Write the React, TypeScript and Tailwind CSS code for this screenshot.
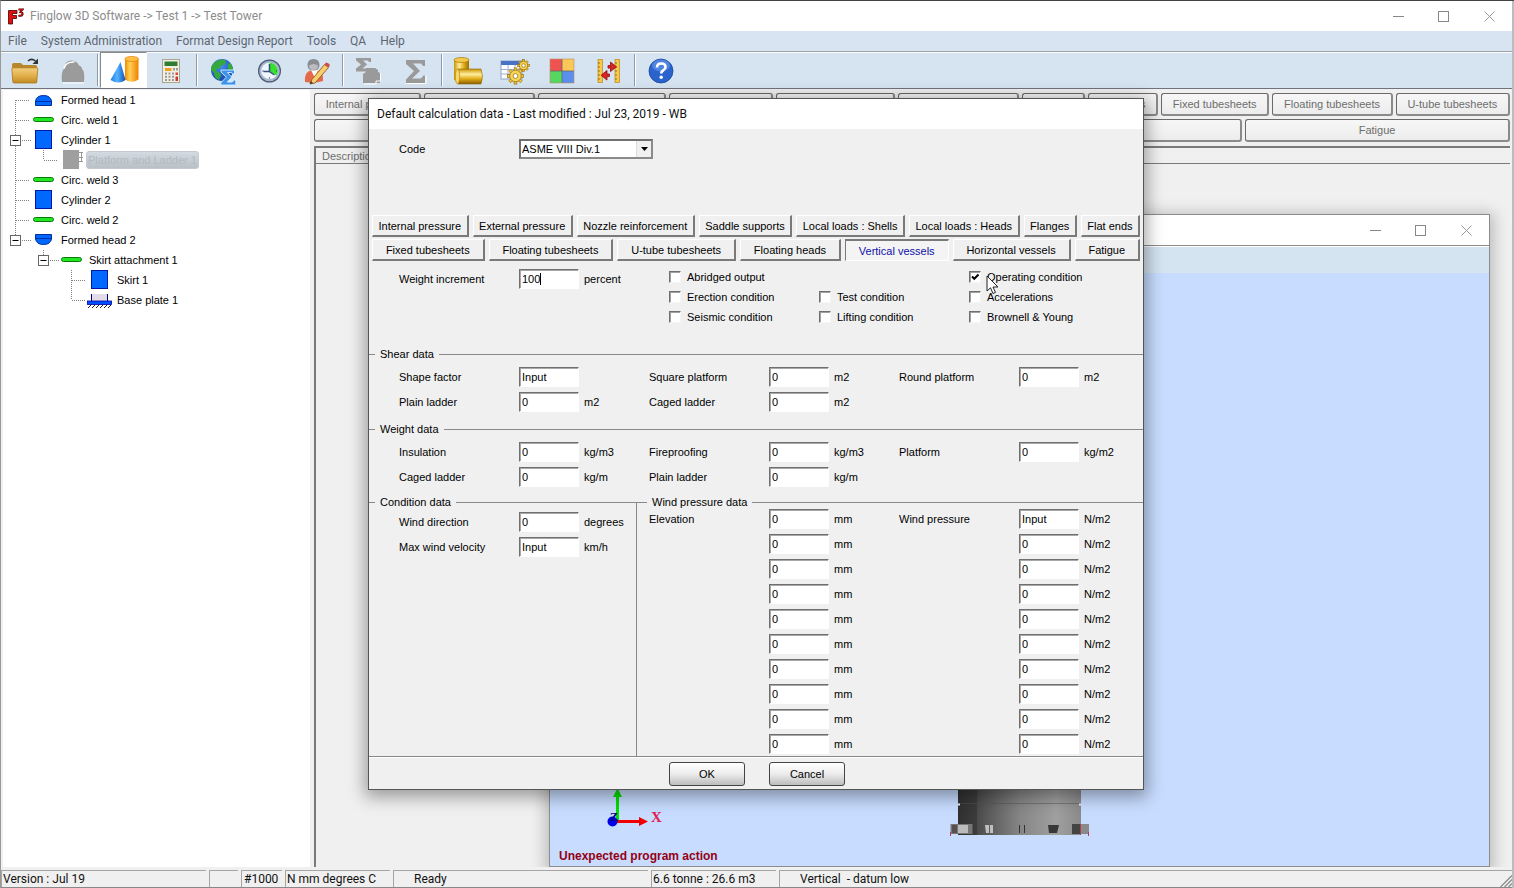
import React, { useId } from "react";

const SYS = "font-['Roboto','Open_Sans',sans-serif]";
const UI = "font-['Liberation_Sans',Arial,sans-serif]";

/* ---------- toolbar icons ---------- */

function Defs() {
  return (
    <svg width="0" height="0" className="absolute" aria-hidden="true">
      <defs>
        <linearGradient id="gold" x1="0" y1="0" x2="0" y2="1">
          <stop offset="0" stopColor="#f3cf80" />
          <stop offset="0.5" stopColor="#e3b04c" />
          <stop offset="1" stopColor="#c18a24" />
        </linearGradient>
        <linearGradient id="pipe" x1="0" y1="0" x2="0" y2="1">
          <stop offset="0" stopColor="#c99400" />
          <stop offset="0.35" stopColor="#ffefa0" />
          <stop offset="0.65" stopColor="#e3ad1a" />
          <stop offset="1" stopColor="#8d5f00" />
        </linearGradient>
        <linearGradient id="pipeV" x1="0" y1="0" x2="1" y2="0">
          <stop offset="0" stopColor="#c99400" />
          <stop offset="0.35" stopColor="#ffefa0" />
          <stop offset="0.65" stopColor="#e3ad1a" />
          <stop offset="1" stopColor="#9d6f00" />
        </linearGradient>
        <linearGradient id="orange" x1="0" y1="0" x2="1" y2="0">
          <stop offset="0" stopColor="#f08a00" />
          <stop offset="0.35" stopColor="#ffd257" />
          <stop offset="1" stopColor="#f08000" />
        </linearGradient>
        <linearGradient id="cone" x1="0" y1="0" x2="1" y2="0">
          <stop offset="0" stopColor="#1d7ee0" />
          <stop offset="0.45" stopColor="#58b4ff" />
          <stop offset="1" stopColor="#0b50b8" />
        </linearGradient>
        <radialGradient id="globe" cx="0.4" cy="0.3" r="0.8">
          <stop offset="0" stopColor="#4a94f4" />
          <stop offset="1" stopColor="#0b3aa5" />
        </radialGradient>
        <linearGradient id="vessel" x1="0" y1="0" x2="1" y2="0">
          <stop offset="0" stopColor="#303030" />
          <stop offset="0.15" stopColor="#3c3c3c" />
          <stop offset="0.16" stopColor="#4c4c4c" />
          <stop offset="0.5" stopColor="#858585" />
          <stop offset="0.8" stopColor="#a0a0a0" />
          <stop offset="1" stopColor="#8a8a8a" />
        </linearGradient>
      </defs>
    </svg>
  );
}

function Svg({ children }: { children: React.ReactNode }) {
  return (
    <svg width="30" height="30" viewBox="0 0 30 30" className="shrink-0" aria-hidden="true">
      {children}
    </svg>
  );
}

const FolderIcon = () => (
  <Svg>
    <path d="M2 8.500 q0-1.500 1.500-1.500 h7.500 l2 2 h12.500 q1.500 0 1.500 1.500 v15 q0 1.500-1.500 1.500 h-21 q-1.500 0-1.500-1.500z" fill="#b8862b" />
    <path d="M1.800 12.800 q0-1 1-1 h24 q1.200 0 1 1.200 l-1 12.800 q0 1.200-1.500 1.200 h-21 q-1.500 0-1.500-1.200z" fill="url(#gold)" stroke="#a87a20" strokeWidth="0.800" />
    <path d="M18 5 q3.500-3.200 7.500 0" fill="none" stroke="#333" strokeWidth="1.600" />
    <path d="M28 2.500 v5.500 h-5.500z" fill="#333" />
  </Svg>
);
const BagIcon = () => (
  <Svg>
    <path d="M5 26 q-1-8 1-12 q1-1.500 2-2 q-1-7 6-7.500 q6 0 8 5 q3 1 3 3.500 q1.500 1 2 4 q0.500 5 0 9z" fill="#9b9b9b" />
    <path d="M7 12.500 l2-4 q3-3 8.500-2.500" fill="none" stroke="#fff" strokeWidth="1.400" />
    <path d="M6 27 h21" stroke="#fff" strokeWidth="1" />
  </Svg>
);
const ShapesIcon = () => (
  <Svg>
    <path d="M16 4.500 v20 q6.500 4.500 13.500 0 v-20z" fill="url(#orange)" />
    <ellipse cx="22.700" cy="4" rx="6.800" ry="2.500" fill="#ffc04a" stroke="#e88600" strokeWidth="0.800" />
    <path d="M11.500 7 L1.500 25 q8 5 15 0z" fill="url(#cone)" />
  </Svg>
);
const CalculatorIcon = () => (
  <Svg>
    <rect x="6.500" y="3.500" width="17" height="23" fill="#f1efe2" stroke="#a8a68f" />
    <rect x="8.500" y="5.500" width="13" height="4.500" fill="#2f7d32" />
    <rect x="9" y="12" width="6.500" height="3" fill="#f0a020" />
    <g fill="#9b9b9b">
      <rect x="17" y="12" width="2" height="2.500" /><rect x="20" y="12" width="2" height="2.500" />
      <rect x="9" y="16.500" width="2" height="2" /><rect x="12.500" y="16.500" width="2" height="2" /><rect x="16" y="16.500" width="2" height="2" />
      <rect x="9" y="19.800" width="2" height="2" /><rect x="12.500" y="19.800" width="2" height="2" /><rect x="16" y="19.800" width="2" height="2" />
      <rect x="9" y="23" width="2" height="2" /><rect x="12.500" y="23" width="2" height="2" /><rect x="16" y="23" width="2" height="2" />
    </g>
    <rect x="19.500" y="16.500" width="2.500" height="2.500" fill="#d44" />
    <rect x="19.500" y="20.500" width="2.500" height="4.500" fill="#c33" />
  </Svg>
);
const GlobeIcon = () => (
  <Svg>
    <circle cx="14" cy="14" r="11" fill="url(#globe)" />
    <path d="M5 8 q4-5 11-4.500 l2 2 -1 3 -4 1 -1 3 -4 0.500 1 2.500 q4 1 4 4 l-2 4.500 q-5-2-5-7 l-3-3 q0-4 2-6z M20 7 l3 1 q2.500 4 2 8 l-5-2z" fill="#35a83e" />
    <path d="M13 14 h13.500 v4 h-2 l-1-1.500 h-4 l4.300 4.700 -4.500 4.800 h5 l1.500-2 h2 v5 h-15 v-2.200 l5.500-5.600 -5.300-5.300z" fill="#3d93ea" stroke="#dbeeff" strokeWidth="0.900" />
  </Svg>
);
const ClockIcon = () => (
  <Svg>
    <circle cx="14.500" cy="15" r="11.500" fill="#4b5a75" />
    <circle cx="14.500" cy="15" r="10.300" fill="#a9b5cb" />
    <circle cx="14.500" cy="15" r="8.300" fill="#eef6ff" />
    <path d="M14.500 15 V6.700 A8.300 8.300 0 0 1 21.500 19.400z" fill="#36e02e" />
    <path d="M14.500 8 v7.500 l5 3.500 M14.500 15.500 h-6" fill="none" stroke="#33507e" strokeWidth="1.500" />
    <g fill="#456"><circle cx="8" cy="15" r="0.700" /><circle cx="14.500" cy="22" r="0.700" /><circle cx="21.500" cy="15" r="0.700" /></g>
  </Svg>
);
const UserPencilIcon = () => (
  <Svg>
    <path d="M3 26 q-1-12 9-12 q10 0 9 11 q-8 3-18 1z" fill="#e46a4b" />
    <path d="M9 14 l4 8 3-8z" fill="#fff" />
    <path d="M5.500 9 q0-6 6-6 q6 0 6 6 q0 5.500-6 5.500 q-6 0-6-5.500z" fill="#8a8d92" />
    <path d="M7 9.500 q4.500-3 9 0 q0 4.500-4.500 4.500 q-4.500 0-4.500-4.500z" fill="#b9bcc0" />
    <path d="M9.500 24 L22.500 8.500 l4 3 L13 27 l-5 1z" fill="#f6cf72" stroke="#a4621f" strokeWidth="1" />
    <path d="M22.500 8.500 l1.500-2 q2.500 0 4 2.500 l-1.500 2.500z" fill="#c8504c" />
    <path d="M8 28 l1-3 2 2z" fill="#333" />
  </Svg>
);
const SigmaBagIcon = () => (
  <Svg>
    <path d="M2 2 h15 v4 h-2 l-1-1.500 h-5 l4 4 -4.500 4 h5 v3 h-11.500 v-3 l5-4 -5-4z" fill="#9a9a9a" />
    <path d="M9 27 v-9 l3-2 v-4 h9 l3 2 v2 l2 1 v10z" fill="#9a9a9a" />
    <path d="M10 28 h12 v-3 h4.500 v-8" fill="none" stroke="#fff" strokeWidth="1" />
  </Svg>
);
const SigmaIcon = () => (
  <Svg>
    <path d="M5 4 h19 v6 h-2 l-2-2.500 h-8 l7 7.500 -8 7.500 h9 l2.500-3 h1.500 v7.500 h-19 v-3.500 l8-8.500 -8-7z" fill="#9a9a9a" />
    <path d="M5 27.500 h20 v-8" fill="none" stroke="#fff" strokeWidth="1" />
  </Svg>
);
const PipesIcon = () => (
  <Svg>
    <path d="M1 4 v20 q7 4 15 0 v-20z" fill="url(#pipeV)" />
    <ellipse cx="8.500" cy="4" rx="7.500" ry="2.500" fill="#f2c94b" stroke="#a97900" strokeWidth="0.700" />
    <path d="M5 13 h23 q3 7 0 15 h-23 q-3-7 0-15z" fill="url(#pipe)" stroke="#8d6400" strokeWidth="0.600" />
    <ellipse cx="4.500" cy="20.500" rx="2.200" ry="7.500" fill="#f6d768" stroke="#a97900" strokeWidth="0.600" />
  </Svg>
);

function Gear({ cx, cy, r }: { cx: number; cy: number; r: number }) {
  return (
    <g transform={`translate(${cx} ${cy})`}>
      {[0, 45, 90, 135, 180, 225, 270, 315].map((a) => (
        <rect key={a} x={-r * 0.24} y={-r * 1.4} width={r * 0.48} height={r * 0.6} fill="#f3c93c" stroke="#9a7412" strokeWidth="0.700" transform={`rotate(${a})`} />
      ))}
      <circle r={r} fill="#f7d65a" stroke="#9a7412" strokeWidth="0.800" />
      <circle r={r * 0.42} fill="#fff" stroke="#9a7412" strokeWidth="0.800" />
    </g>
  );
}
const TableGearIcon = () => (
  <Svg>
    <rect x="1" y="5" width="21" height="18" fill="#fff" stroke="#8fa3c8" />
    <rect x="1" y="5" width="21" height="4" fill="#4a72c4" />
    <path d="M1 13.500 h21 M1 18 h21 M8 9 v14 M15 9 v14" stroke="#9db0d0" strokeWidth="1" />
    <Gear cx={23.500} cy={9.500} r={4.200} />
    <Gear cx={15.500} cy={20} r={5.800} />
  </Svg>
);
const SquaresIcon = () => (
  <Svg>
    <rect x="3" y="3" width="12" height="12" fill="#ef5350" />
    <rect x="15" y="3" width="12" height="12" fill="#fbc757" />
    <rect x="3" y="15" width="12" height="12" fill="#56d860" />
    <rect x="15" y="15" width="12" height="12" fill="#5b8fee" />
    <path d="M15 3 v24 M3 15 h24" stroke="#5b6b6b" strokeWidth="0.800" />
    <rect x="3" y="3" width="24" height="24" fill="none" stroke="#b98f6a" strokeWidth="0.600" />
  </Svg>
);
const RulersIcon = () => (
  <Svg>
    <rect x="4" y="3.500" width="4.500" height="23" fill="#f7c948" stroke="#c1922a" strokeWidth="0.800" />
    <rect x="21" y="3.500" width="4.500" height="23" fill="#f7c948" stroke="#c1922a" strokeWidth="0.800" />
    <path d="M4 7h2M4 11h2M4 15h2M4 19h2M4 23h2M21 7h2M21 11h2M21 15h2M21 19h2M21 23h2" stroke="#7a5a10" strokeWidth="0.800" />
    <path d="M14 9.500 h2.500 v-3.500 l6 4.800 -6 4.800 v-3.500 h-2.500z" fill="#d92424" stroke="#8e0f0f" strokeWidth="0.800" />
    <path d="M15.500 18 h-2.500 v-3.500 l-6 4.800 6 4.800 v-3.500 h2.500z" fill="#d92424" stroke="#8e0f0f" strokeWidth="0.800" />
  </Svg>
);
const HelpIcon = () => (
  <Svg>
    <circle cx="15" cy="15" r="12" fill="#2a63cc" stroke="#1a459c" strokeWidth="0.800" />
    <ellipse cx="15" cy="9.500" rx="9" ry="6" fill="#6c9bea" opacity="0.600" />
    <path d="M11 11.500 q0-4 4.200-4 q4.300 0 4.300 3.600 q0 2-2.300 3.300 q-2 1.200-2 3.100" fill="none" stroke="#fff" strokeWidth="2.600" />
    <circle cx="15.200" cy="21.300" r="1.700" fill="#fff" />
  </Svg>
);

const TOOLBAR: ({ label: string; icon: React.ReactNode; on?: boolean } | null)[] = [
  { label: "Open", icon: <FolderIcon /> },
  { label: "Load weight", icon: <BagIcon /> },
  null,
  { label: "3D model", icon: <ShapesIcon />, on: true },
  { label: "Calculator", icon: <CalculatorIcon /> },
  null,
  { label: "Global sum", icon: <GlobeIcon /> },
  { label: "Time", icon: <ClockIcon /> },
  { label: "Edit user", icon: <UserPencilIcon /> },
  null,
  { label: "Sum weights", icon: <SigmaBagIcon /> },
  { label: "Sum", icon: <SigmaIcon /> },
  null,
  { label: "Materials", icon: <PipesIcon /> },
  { label: "Table settings", icon: <TableGearIcon /> },
  { label: "Colours", icon: <SquaresIcon /> },
  { label: "Dimensions", icon: <RulersIcon /> },
  null,
  { label: "Help", icon: <HelpIcon /> },
];

/* ---------- tree ---------- */

type Cell = "tee" | "top" | "end" | "line" | "blank" | "minus" | "minusEnd";
type Glyph = "headUp" | "headDown" | "weld" | "cyl" | "gray" | "base";

const TREE: { cells: Cell[]; icon: Glyph; label: string; selected?: boolean }[] = [
  { cells: ["top"], icon: "headUp", label: "Formed head 1" },
  { cells: ["tee"], icon: "weld", label: "Circ. weld 1" },
  { cells: ["minus"], icon: "cyl", label: "Cylinder 1" },
  { cells: ["line", "end"], icon: "gray", label: "Platform and Ladder 1", selected: true },
  { cells: ["tee"], icon: "weld", label: "Circ. weld 3" },
  { cells: ["tee"], icon: "cyl", label: "Cylinder 2" },
  { cells: ["tee"], icon: "weld", label: "Circ. weld 2" },
  { cells: ["minusEnd"], icon: "headDown", label: "Formed head 2" },
  { cells: ["blank", "minusEnd"], icon: "weld", label: "Skirt attachment 1" },
  { cells: ["blank", "blank", "tee"], icon: "cyl", label: "Skirt 1" },
  { cells: ["blank", "blank", "end"], icon: "base", label: "Base plate 1" },
];

function TreeCell({ kind }: { kind: Cell }) {
  const v: Record<Cell, string> = {
    top: "M12.500 10 V20 M13 10.500 H27",
    tee: "M12.500 0 V20 M13 10.500 H27",
    end: "M12.500 0 V10 M13 10.500 H27",
    line: "M12.500 0 V20",
    blank: "",
    minus: "M12.500 0 V20 M19 10.500 H28",
    minusEnd: "M12.500 0 V5 M19 10.500 H28",
  };
  return (
    <svg width="28" height="20" viewBox="0 0 28 20" className="shrink-0" aria-hidden="true">
      {v[kind] && <path d={v[kind]} stroke="#808080" strokeDasharray="1 1" fill="none" />}
      {(kind === "minus" || kind === "minusEnd") && (
        <>
          <rect x="7.500" y="5.500" width="10" height="10" fill="#fff" stroke="#666" />
          <path d="M9.500 10.500 h6" stroke="#000" />
        </>
      )}
    </svg>
  );
}

function TreeGlyph({ kind }: { kind: Glyph }) {
  return (
    <svg width="26" height="20" viewBox="0 0 26 20" className="-mx-px shrink-0" aria-hidden="true">
      {kind === "headUp" && (
        <>
          <path d="M5.500 15.500 V11 q1-5.500 8-5.500 q7 0 8 5.500 v4.500z" fill="#0068ff" stroke="#0030a0" />
          <path d="M5 11.500 h17" stroke="#0030a0" />
        </>
      )}
      {kind === "headDown" && (
        <>
          <path d="M5.500 4.500 V9 q1 5.500 8 5.500 q7 0 8-5.500 v-4.500z" fill="#0068ff" stroke="#0030a0" />
          <path d="M5 8.500 h17" stroke="#0030a0" />
        </>
      )}
      {kind === "weld" && <rect x="3.500" y="7.500" width="20" height="4" rx="2" fill="#22e622" stroke="#087a08" />}
      {kind === "cyl" && <rect x="5.500" y="0.500" width="16" height="18" fill="#0068ff" stroke="#0018a8" />}
      {kind === "gray" && (
        <>
          <rect x="5" y="0" width="16" height="19" fill="#9f9f9f" />
          <path d="M21 2.500 h4 M21 7.500 h4 M21 11.500 h4 M23.500 2 v10" stroke="#999" fill="none" />
        </>
      )}
      {kind === "base" && (
        <>
          <rect x="5" y="4" width="16" height="7" fill="#e2dce8" />
          <path d="M5.500 4 v7 M21.500 4 v7" stroke="#000080" />
          <rect x="1.500" y="11" width="24" height="3.500" fill="#0050ff" stroke="#0000a0" strokeWidth="0.800" />
          <path d="M2 18 l3-3 M6 18 l3-3 M10 18 l3-3 M14 18 l3-3 M18 18 l3-3 M22 18 l3-3" stroke="#222" />
        </>
      )}
    </svg>
  );
}

function Tree() {
  return (
    <ul className="w-[307px] shrink-0 overflow-hidden bg-white">
      {TREE.map((n) => (
        <li key={n.label} className="flex h-5 items-center whitespace-nowrap">
          {n.cells.map((c, i) => (
            <TreeCell key={i} kind={c} />
          ))}
          <TreeGlyph kind={n.icon} />
          {n.selected ? (
            <span className="ml-[3px] h-[18px] rounded-[3px] border border-[#c3c9cf] bg-linear-to-b from-[#d3dbe2] to-[#b9c0c6] px-px leading-4 text-[#b2bac1]">
              {n.label}
            </span>
          ) : (
            <span className="ml-1.5">{n.label}</span>
          )}
        </li>
      ))}
    </ul>
  );
}

/* ---------- main window pieces ---------- */

function WindowButtons() {
  return (
    <div className="flex h-full">
      <button aria-label="Minimize" className="flex w-[45px] items-center justify-center">
        <svg width="11" height="11" viewBox="0 0 11 11"><path d="M0 5.500 h11" stroke="#888" /></svg>
      </button>
      <button aria-label="Maximize" className="flex w-[45px] items-center justify-center">
        <svg width="11" height="11" viewBox="0 0 11 11"><rect x="0.500" y="0.500" width="10" height="10" fill="none" stroke="#888" /></svg>
      </button>
      <button aria-label="Close" className="flex w-[46px] items-center justify-center">
        <svg width="11" height="11" viewBox="0 0 11 11"><path d="M0.500 0.500 l10 10 M10.500 0.500 l-10 10" stroke="#999" fill="none" /></svg>
      </button>
    </div>
  );
}

const ROW1 = ["Internal pressure", "External pressure", "Nozzle reinforcement", "Saddle supports", "Local loads : Shells", "Local loads : Heads", "Flanges", "Flat ends"];
const ROW2 = ["Fixed tubesheets", "Floating tubesheets", "U-tube tubesheets", "Floating heads", "Vertical vessels", "Horizontal vessels", "Fatigue"];

function CategoryButton({ label }: { label: string }) {
  return (
    <button className="h-[23px] flex-auto whitespace-nowrap rounded-[3px] border border-[#6a6a6a] border-r-2 border-b-2 border-r-[#8a8a8a] border-b-[#8a8a8a] bg-linear-to-b from-[#f7f7f7] to-[#ececec] text-[#6d6d6d]">
      {label}
    </button>
  );
}

function ModelWindow() {
  return (
    <section className="absolute top-[124px] right-[22px] bottom-0 left-[235px] flex flex-col border border-[#8c8c8c] bg-white shadow-[0_3px_14px_4px_rgba(0,0,0,0.22)]">
      <div className="flex h-[31px] shrink-0 justify-end border-b border-[#8d8d8d]">
        <WindowButtons />
      </div>
      <div className="mt-px h-[26px] shrink-0 bg-[#d5e4f1]" />
      <div className="relative flex-1 bg-[#c7dcff]">
        <svg width="60" height="60" viewBox="0 0 60 60" className="absolute bottom-[30px] left-[55px]" aria-label="Axes">
          <path d="M12.500 46 V15" stroke="#00e000" strokeWidth="3" />
          <path d="M12.500 12 l4.500 9 h-9z" fill="#00e000" />
          <path d="M10 45.500 H34" stroke="#f00000" strokeWidth="3" />
          <path d="M43 45.500 l-9-4.500 v9z" fill="#f00000" />
          <circle cx="7.500" cy="45.500" r="5" fill="#0000e8" />
          <text x="5" y="45" fontFamily="Liberation Serif" fontWeight="700" fontSize="12" fill="#000090">Z</text>
          <text x="46" y="46" fontFamily="Liberation Serif" fontWeight="700" fontSize="15" fill="#e02050">X</text>
        </svg>
        <svg width="140" height="100" viewBox="0 0 140 100" className="absolute bottom-[30px] left-[400px]" aria-label="Vessel">
          <rect x="8" y="0" width="123" height="99" fill="url(#vessel)" />
          <path d="M8 67.500 h123" stroke="#555" opacity="0.500" />
          <path d="M8 68.500 h2 M129 68.500 h2" stroke="#e8eefa" strokeWidth="2" />
          <path d="M0.500 88 h22 v10 h-22z" fill="#777" />
          <path d="M8 89 h10 v8 h-10z" fill="#bbb" />
          <path d="M2 89 h5 v8 h-5z" fill="#5a5050" />
          <path d="M35 89 h4 v8 h-3z M40 89 h3 v8 h-3z" fill="#c0c0c0" />
          <path d="M69.500 89 v8 M74.500 89 v8" stroke="#333" />
          <path d="M98 89 h11 l-2 8 h-8z" fill="#383838" />
          <path d="M122 88 h9 v10 h-9z" fill="#444" />
          <path d="M131 88 h8 v10 h-8z" fill="#8a8a8a" />
          <path d="M130.500 88 v11 M138.500 96 v4 M0.500 96 v4" stroke="#b04050" />
        </svg>
        <p className="absolute bottom-0.5 left-[9px] text-[12px] leading-4 font-bold text-[#960014]">Unexpected program action</p>
      </div>
    </section>
  );
}

/* ---------- dialog ---------- */

const INPUT =
  "h-5 w-[60px] rounded-none border border-t-[#6f6f6f] border-l-[#6f6f6f] border-r-white border-b-white bg-white pl-0.5 text-[11px] shadow-[inset_1px_1px_0_#a8a8a8] outline-none";

function Field({ label, name, value, unit, caret }: { label?: string; name?: string; value: string; unit?: string; caret?: boolean }) {
  const id = useId();
  return (
    <div className="flex h-5 w-[250px] shrink-0 items-center whitespace-nowrap">
      <label htmlFor={id} className="w-[120px]">
        {label}
      </label>
      <span className="relative flex">
        <input id={id} aria-label={name ?? label} defaultValue={value} className={INPUT} />
        {caret && <span className="absolute top-1 left-[21px] h-3 w-px bg-black" />}
      </span>
      <span className="ml-[5px]">{unit}</span>
    </div>
  );
}

function Check({ label, checked }: { label: string; checked?: boolean }) {
  return (
    <label className="flex h-5 w-[150px] items-center gap-1.5 whitespace-nowrap">
      <span className="relative flex">
        <input
          type="checkbox"
          defaultChecked={checked}
          className="peer size-3 appearance-none border border-t-[#6f6f6f] border-l-[#6f6f6f] border-r-[#f5f5f5] border-b-[#f5f5f5] bg-white shadow-[inset_1px_1px_0_#a0a0a0]"
        />
        <svg width="12" height="12" viewBox="0 0 12 12" className="pointer-events-none absolute inset-0 hidden peer-checked:block">
          <path d="M3 5.500 l2.300 2.300 L9.500 3.500" fill="none" stroke="#000" strokeWidth="2" />
        </svg>
      </span>
      {label}
    </label>
  );
}

function GroupTitle({ children, lead = "w-1.5" }: { children: string; lead?: string }) {
  return (
    <h3 className="flex h-4 items-center gap-[5px] whitespace-nowrap">
      <span className={`h-px shrink-0 bg-[#888] ${lead}`} />
      {children}
      <span className="h-px flex-1 bg-[#888]" />
    </h3>
  );
}

function Tab({ label, active }: { label: string; active?: boolean }) {
  return (
    <button
      role="tab"
      aria-selected={!!active}
      className={
        "h-[22px] flex-auto whitespace-nowrap border pt-px " +
        (active
          ? "border-t-2 border-t-[#7a7a7a] border-l-[#7a7a7a] border-r-white border-b-white bg-[#f4f4f4] text-[#1010a8]"
          : "border-r-2 border-b-2 border-t-white border-l-white border-r-[#7a7a7a] border-b-[#7a7a7a] bg-[#f0f0f0]")
      }
    >
      {label}
    </button>
  );
}

const PUSH =
  "h-6 w-[76px] rounded-[3px] border border-[#444] bg-linear-to-b from-white via-[#ececec] to-[#bdbdbd]";

function Dialog() {
  return (
    <div
      role="dialog"
      aria-label="Default calculation data"
      className="absolute top-[97px] left-[367px] flex w-[776px] flex-col border border-[#555] bg-[#f0f0f0] shadow-[0_4px_16px_3px_rgba(0,0,0,0.36)]"
    >
      <h2 className={`h-[30px] bg-white pl-2 text-[12px] leading-[30px] text-[#111] ${SYS}`}>
        Default calculation data - Last modified : Jul 23, 2019 - WB
      </h2>

      <div className="mt-2.5 flex h-5 items-center pl-[30px]">
        <label htmlFor="code" className="w-[120px]">Code</label>
        <span className="relative flex">
          <select
            id="code"
            className="h-5 w-[134px] appearance-none rounded-none border-2 border-t-[#6f6f6f] border-l-[#6f6f6f] border-r-[#8a8a8a] border-b-[#8a8a8a] bg-white pl-px text-[11px]"
          >
            <option>ASME VIII Div.1</option>
          </select>
          <span className="pointer-events-none absolute top-0.5 right-0.5 flex h-4 w-[15px] items-center justify-center border-l border-l-[#ddd] bg-[#f0f0f0]">
            <svg width="7" height="4" viewBox="0 0 7 4"><path d="M0 0 h7 l-3.500 4z" /></svg>
          </span>
        </span>
      </div>

      <div role="tablist" className="mt-14 flex flex-col gap-0.5 pr-[3px] pl-[3px]">
        <div className="flex gap-1">
          {ROW1.map((t) => (
            <Tab key={t} label={t} />
          ))}
        </div>
        <div className="flex gap-1">
          {ROW2.map((t) => (
            <Tab key={t} label={t} active={t === "Vertical vessels"} />
          ))}
        </div>
      </div>

      <div className="mt-1.5 flex pl-[30px]">
        <div className="w-[270px] pt-0.5">
          <Field label="Weight increment" value="100" unit="percent" caret />
        </div>
        <div className="grid grid-cols-[repeat(3,150px)]">
          <Check label="Abridged output" />
          <span />
          <Check label="Operating condition" checked />
          <Check label="Erection condition" />
          <Check label="Test condition" />
          <Check label="Accelerations" />
          <Check label="Seismic condition" />
          <Check label="Lifting condition" />
          <Check label="Brownell & Young" />
        </div>
      </div>

      <section className="mt-[19px]">
        <GroupTitle>Shear data</GroupTitle>
        <div className="mt-[5px] grid grid-cols-[repeat(3,250px)] gap-y-[5px] overflow-hidden pl-[30px]">
          <Field label="Shape factor" value="Input" />
          <Field label="Square platform" value="0" unit="m2" />
          <Field label="Round platform" value="0" unit="m2" />
          <Field label="Plain ladder" value="0" unit="m2" />
          <Field label="Caged ladder" value="0" unit="m2" />
        </div>
      </section>

      <section className="mt-[9px]">
        <GroupTitle>Weight data</GroupTitle>
        <div className="mt-[5px] grid grid-cols-[repeat(3,250px)] gap-y-[5px] overflow-hidden pl-[30px]">
          <Field label="Insulation" value="0" unit="kg/m3" />
          <Field label="Fireproofing" value="0" unit="kg/m3" />
          <Field label="Platform" value="0" unit="kg/m2" />
          <Field label="Caged ladder" value="0" unit="kg/m" />
          <Field label="Plain ladder" value="0" unit="kg/m" />
        </div>
      </section>

      <div className="mt-[7px] flex border-b border-[#888]">
        <section className="w-[267px] shrink-0">
          <GroupTitle>Condition data</GroupTitle>
          <div className="mt-0.5 flex flex-col gap-[5px] pl-[30px]">
            <Field label="Wind direction" value="0" unit="degrees" />
            <Field label="Max wind velocity" value="Input" unit="km/h" />
          </div>
        </section>
        <div className="mt-2 w-px shrink-0 bg-[#888]" />
        <section className="min-w-0 flex-1 overflow-hidden pb-0.5">
          <GroupTitle lead="w-2.5">Wind pressure data</GroupTitle>
          <div className="-mt-px flex flex-col gap-[5px] pl-3">
            {Array.from({ length: 10 }, (_, i) => (
              <div key={i} className="flex">
                <Field label={i ? undefined : "Elevation"} name={`Elevation ${i + 1}`} value="0" unit="mm" />
                <Field label={i ? undefined : "Wind pressure"} name={`Wind pressure ${i + 1}`} value={i ? "0" : "Input"} unit="N/m2" />
              </div>
            ))}
          </div>
        </section>
      </div>

      <div className="flex gap-6 border-t border-white pt-1 pb-[3px] pl-[300px]">
        <button className={PUSH}>OK</button>
        <button className={PUSH}>Cancel</button>
      </div>

      <svg width="13" height="20" viewBox="0 0 13 20" className="absolute top-[176px] left-[617px]" aria-hidden="true">
        <path d="M1 1 V16 L4.500 12.800 L7 18.500 L9.500 17.400 L7 12 H12z" fill="#fff" stroke="#222" />
      </svg>
    </div>
  );
}

const STATUS: { text: string; cls: string }[] = [
  { text: "Version : Jul 19", cls: "w-[205px] pl-px" },
  { text: "", cls: "w-[29px]" },
  { text: "#1000", cls: "w-[41px] pl-0.5" },
  { text: "N mm degrees C", cls: "w-[105px] pl-px" },
  { text: "Ready", cls: "w-[255px] pl-5" },
  { text: "6.6 tonne : 26.6 m3", cls: "w-[125px] pl-px" },
  { text: "Vertical  - datum low", cls: "flex-1 pl-5" },
];

export default function App() {
  return (
    <div className={`relative flex h-screen min-h-[820px] flex-col overflow-hidden border-t border-l border-t-[#444] border-l-[#999] bg-[#b9bcc0] pr-0.5 text-[11px] text-black ${UI}`}>
      <Defs />
      <header className={`flex h-[30px] shrink-0 items-center bg-white pl-1.5 text-[12px] text-[#8c8c8c] ${SYS}`}>
        <svg width="17" height="17" viewBox="0 0 17 17" className="mr-1.5 shrink-0" aria-hidden="true">
          <path d="M1.500 2.500 H10 V5.500 H5.500 V7.500 H9.500 V10.500 H5.500 V16 H1.500z" fill="#e00f10" stroke="#4a0000" strokeWidth="0.800" />
          <path d="M11.500 1.500 h4 l-2 2.500 q2.500 0.500 2 2.500 q-1 2-4 1" fill="none" stroke="#5a0000" strokeWidth="2" />
          <path d="M11.500 1.500 h4 l-2 2.500 q2.500 0.500 2 2.500 q-1 2-4 1" fill="none" stroke="#d01010" strokeWidth="1" />
        </svg>
        <h1 className="flex-1">Finglow 3D Software -&gt; Test 1 -&gt; Test Tower</h1>
        <WindowButtons />
      </header>

      <nav className={`flex h-5 shrink-0 items-center bg-[#d8e4f2] text-[12px] text-[#5d6670] ${SYS}`}>
        {["File", "System Administration", "Format Design Report", "Tools", "QA", "Help"].map((m) => (
          <button key={m} className="px-[7px]">
            {m}
          </button>
        ))}
      </nav>

      <div className="flex h-[38px] shrink-0 items-stretch border-t border-b border-t-[#9aa0a8] border-b-[#6f737a] bg-[#d6e4f2] shadow-[inset_0_1px_0_#fff]">
        {TOOLBAR.map((t, i) =>
          t ? (
            <button
              key={i}
              aria-label={t.label}
              className={
                "flex w-[47px] items-center justify-center " +
                (t.on ? "border border-t-[#8a8a8a] border-l-[#8a8a8a] border-r-white border-b-white bg-white" : "pt-px")
              }
            >
              {t.icon}
            </button>
          ) : (
            <span key={i} className="flex w-[5px] justify-center py-0.5">
              <span className="w-0.5 border-r border-l border-l-[#8f98a3] border-r-white" />
            </span>
          )
        )}
      </div>

      <main className="flex min-h-0 flex-1 bg-[#f0f0f0] pt-px pl-0.5">
        <Tree />
        <div className="relative ml-1 min-w-0 flex-1">
          <div className="flex gap-[3px] pt-[3px] pr-0.5">
            {[...ROW1, ...ROW2.slice(0, 3)].map((t) => (
              <CategoryButton key={t} label={t} />
            ))}
          </div>
          <div className="flex gap-[3px] pt-[3px] pr-0.5">
            {ROW2.slice(3).map((t) => (
              <CategoryButton key={t} label={t} />
            ))}
          </div>
          <div className="absolute top-14 right-0.5 bottom-0 left-0 border-t-2 border-l-2 border-t-[#7a7a7a] border-l-[#7a7a7a]">
            <div className="h-4 border-b border-[#7a7a7a] pl-1.5 leading-4 text-[#6d6d6d]">Description</div>
          </div>
          <ModelWindow />
        </div>
      </main>

      <footer className={`relative flex h-[21px] shrink-0 gap-[3px] border-b border-[#888] bg-[#f0f0f0] pt-[3px] text-[12px] text-[#111] ${SYS}`}>
        {STATUS.map((s, i) => (
          <span
            key={i}
            className={`h-[17px] shrink-0 overflow-hidden border-t border-l border-[#a5a5a5] leading-4 whitespace-pre ${s.cls}`}
          >
            {s.text}
          </span>
        ))}
        <svg width="12" height="12" viewBox="0 0 12 12" className="absolute right-0 bottom-0" aria-hidden="true">
          <path d="M0.500 12 L12 0.500 M4.500 12 L12 4.500 M8.500 12 L12 8.500" stroke="#8c8c8c" strokeWidth="1.300" />
        </svg>
      </footer>

      <Dialog />
    </div>
  );
}
